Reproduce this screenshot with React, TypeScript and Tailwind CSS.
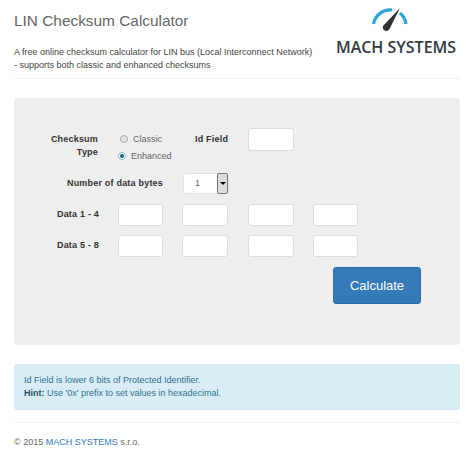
import React from 'react';

const Logo = () => (
    <div className="flex flex-col items-center shrink-0 w-[128px] pt-[6px]">
        <svg width="60" height="26" viewBox="0 0 60 26" className="block -translate-x-[3px]">
            <path d="M10.5 18 A 17 17 0 0 1 29 4" fill="none" stroke="#2ea3dc" strokeWidth="3.2" />
            <path d="M37 7 A 17 17 0 0 1 43 18" fill="none" stroke="#2ea3dc" strokeWidth="3.2" />
            <path d="M37 2 L20 20 Q19 24 23 25 Q26 25 27 22 Z" fill="#2f3336" />
        </svg>
        <span className="font-['Open_Sans',sans-serif] font-semibold text-[16px] leading-[20px] text-[#333a40] whitespace-nowrap mt-[5px]">
            MACH SYSTEMS
        </span>
    </div>
);

const TextBox = ({ className = 'h-[22px]' }: { className?: string }) => (
    <div className={`${className} bg-white border border-[#dcdcdc] rounded-[3px]`}></div>
);

const App = () => {
    return (
        <div className="w-[474px] h-[456px] overflow-hidden bg-white px-[14px] font-['Liberation_Sans',Arial,sans-serif] text-[#333]">
            {/* Header */}
            <div className="flex justify-between h-[79px] border-b border-[#eeeeee]">
                <div>
                    <h1 className="text-[15.4px] leading-[20px] text-[#666] mt-[11px]">LIN Checksum Calculator</h1>
                    <p className="text-[9px] leading-[13px] text-[#444] mt-[15px] whitespace-nowrap">
                        A free online checksum calculator for LIN bus (Local Interconnect Network)
                    </p>
                    <p className="text-[9px] leading-[13px] text-[#444] whitespace-nowrap">
                        - supports both classic and enhanced checksums
                    </p>
                </div>
                <Logo />
            </div>

            {/* Form panel */}
            <div className="mt-[19px] h-[247px] bg-[#eeeeee] rounded-[4px] pt-[30px]">
                <div className="flex h-[45px]">
                    <div className="w-[104px] pr-[20px] pt-[5px] text-right text-[9px] leading-[13px] font-bold tracking-[0.2px]">
                        Checksum
                        <br />
                        Type
                    </div>
                    <div className="w-[77px] pt-[4px] flex flex-col gap-[3px] text-[9px] leading-[14px] text-[#666]">
                        <div className="flex items-center gap-[5px] pl-[2px]">
                            <span className="w-[8px] h-[8px] rounded-full border border-[#aaa] bg-[#e4e4e4]"></span>
                            Classic
                        </div>
                        <div className="flex items-center gap-[5px]">
                            <span className="w-[8px] h-[8px] rounded-full border border-[#8fb4cc] bg-white flex items-center justify-center">
                                <span className="w-[4px] h-[4px] rounded-full bg-[#1f5f8a]"></span>
                            </span>
                            Enhanced
                        </div>
                    </div>
                    <div className="w-[53px] pt-[5px] text-[9px] leading-[13px] font-bold tracking-[0.2px]">Id Field</div>
                    <div className="w-[46px]">
                        <TextBox className="h-[23px]" />
                    </div>
                </div>

                <div className="flex items-center">
                    <div className="w-[149px] text-right text-[9px] font-bold tracking-[0.2px] whitespace-nowrap">
                        Number of data bytes
                    </div>
                    <div className="ml-[20px] w-[46px] h-[21px] bg-white rounded-[3px] border border-[#e2e2e2] flex items-center justify-between text-[9px] text-[#666] pl-[11px]">
                        1
                        <span className="w-[11px] h-[21px] bg-[#dcdcdc] border border-[#777] rounded-[2px] flex items-center justify-center">
                            <span className="w-0 h-0 border-l-[3px] border-r-[3px] border-t-[3px] border-l-transparent border-r-transparent border-t-black"></span>
                        </span>
                    </div>
                </div>

                <div className="mt-[10px] flex flex-col gap-[9px]">
                    {['Data 1 - 4', 'Data 5 - 8'].map((label) => (
                        <div key={label} className="flex items-center">
                            <div className="w-[104px] pr-[19px] text-right text-[9px] font-bold tracking-[0.2px] whitespace-nowrap">{label}</div>
                            <div className="grid grid-cols-[45px_46px_46px_45px] gap-x-[19.33px]">
                                <TextBox />
                                <TextBox />
                                <TextBox />
                                <TextBox />
                            </div>
                        </div>
                    ))}
                </div>

                <div className="flex justify-end pr-[39px] mt-[10px]">
                    <button className="w-[88px] h-[37px] bg-[#337ab7] border border-[#2e6da4] rounded-[3px] text-white text-[13px]">
                        Calculate
                    </button>
                </div>
            </div>

            {/* Hint */}
            <div className="mt-[19px] h-[46px] bg-[#d9edf7] border border-[#d3e9f3] rounded-[3px] px-[9px] pt-[9px] text-[9px] leading-[13px] text-[#31708f]">
                <div>Id Field is lower 6 bits of Protected Identifier.</div>
                <div><b className="font-bold text-[#245269]">Hint:</b> Use '0x' prefix to set values in hexadecimal.</div>
            </div>

            {/* Footer */}
            <div className="mt-[12px] border-t border-[#eeeeee] pt-[13px] text-[9px] leading-[13px] text-[#666]">
                © 2015 <span className="text-[#337ab7]">MACH SYSTEMS</span> s.r.o.
            </div>
        </div>
    );
};

export default App;
